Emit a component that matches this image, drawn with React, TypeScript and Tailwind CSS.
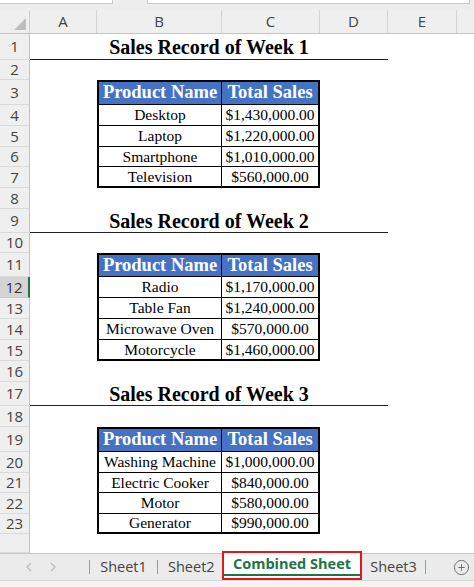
import { CirclePlus } from 'lucide-react';

type Row = {
  n: number;
  h: string;
  kind?: 'title' | 'head' | 'body';
  text?: string;
  a?: string;
  b?: string;
  last?: boolean;
};

const ROWS: Row[] = [
  { n: 1, h: 'h-[26px]', kind: 'title', text: 'Sales Record of Week 1' },
  { n: 2, h: 'h-[20px]' },
  { n: 3, h: 'h-[25px]', kind: 'head' },
  { n: 4, h: 'h-[21px]', kind: 'body', a: 'Desktop', b: '$1,430,000.00' },
  { n: 5, h: 'h-[21px]', kind: 'body', a: 'Laptop', b: '$1,220,000.00' },
  { n: 6, h: 'h-[20px]', kind: 'body', a: 'Smartphone', b: '$1,010,000.00' },
  { n: 7, h: 'h-[21px]', kind: 'body', a: 'Television', b: '$560,000.00', last: true },
  { n: 8, h: 'h-[21px]' },
  { n: 9, h: 'h-[24px]', kind: 'title', text: 'Sales Record of Week 2' },
  { n: 10, h: 'h-[20px]' },
  { n: 11, h: 'h-[24px]', kind: 'head' },
  { n: 12, h: 'h-[21px]', kind: 'body', a: 'Radio', b: '$1,170,000.00' },
  { n: 13, h: 'h-[21px]', kind: 'body', a: 'Table Fan', b: '$1,240,000.00' },
  { n: 14, h: 'h-[21px]', kind: 'body', a: 'Microwave Oven', b: '$570,000.00' },
  { n: 15, h: 'h-[21px]', kind: 'body', a: 'Motorcycle', b: '$1,460,000.00', last: true },
  { n: 16, h: 'h-[21px]' },
  { n: 17, h: 'h-[24px]', kind: 'title', text: 'Sales Record of Week 3' },
  { n: 18, h: 'h-[21px]' },
  { n: 19, h: 'h-[25px]', kind: 'head' },
  { n: 20, h: 'h-[21px]', kind: 'body', a: 'Washing Machine', b: '$1,000,000.00' },
  { n: 21, h: 'h-[20px]', kind: 'body', a: 'Electric Cooker', b: '$840,000.00' },
  { n: 22, h: 'h-[21px]', kind: 'body', a: 'Motor', b: '$580,000.00' },
  { n: 23, h: 'h-[20px]', kind: 'body', a: 'Generator', b: '$990,000.00', last: true },
  { n: 24, h: 'h-[19px]' },
];

const serif = "font-['Liberation_Serif','Times_New_Roman',serif]";
const ui = "font-['Open_Sans','Segoe_UI',sans-serif]";

export default function App() {
  return (
    <div className={`w-[474px] h-[587px] overflow-hidden bg-white flex flex-col ${ui}`}>
      {/* formula bar remnant */}
      <div className="h-[10px] bg-[#ededed] flex gap-[34px] shrink-0">
        <div className="w-[113px] h-[4px] bg-white border-b border-r border-[#c8c8c8]" />
        <div className="w-[323px] h-[4px] bg-white border-b border-x border-[#c8c8c8]" />
      </div>

      {/* column headers */}
      <div className="h-[24px] flex bg-[#efefef] border-b border-[#c4c4c4] text-[15px] text-[#444] shrink-0">
        <div className="w-[30px] border-r border-[#cfcfcf] flex items-end justify-end pr-[3px] pb-[3px]">
          <div className="w-0 h-0 border-l-[12px] border-l-transparent border-b-[12px] border-b-[#bdbdbd]" />
        </div>
        {[
          ['A', 'w-[67px]'],
          ['B', 'w-[125px]'],
          ['C', 'w-[98px]'],
          ['D', 'w-[68px]'],
          ['E', 'w-[69px]'],
        ].map(([l, w]) => (
          <div key={l} className={`${w} flex items-center justify-center border-r border-[#d4d4d4]`}>{l}</div>
        ))}
        <div className="flex-1" />
      </div>

      {/* grid rows */}
      <div className="flex flex-col shrink-0">
        {ROWS.map(r => (
          <SheetRow key={r.n} row={r} />
        ))}
      </div>

      {/* sheet tabs */}
      <div className="h-[27px] bg-[#ebebeb] border-t border-[#c6c6c6] flex items-center shrink-0 text-[14.5px] text-[#444]">
        <div className="w-[89px] flex items-center gap-[16px] pl-[25px]">
          <svg width="8" height="10" viewBox="0 0 8 10"><path d="M6 1 L2 5 L6 9" fill="none" stroke="#bdbdbd" strokeWidth="1.4" /></svg>
          <svg width="8" height="10" viewBox="0 0 8 10"><path d="M2 1 L6 5 L2 9" fill="none" stroke="#bdbdbd" strokeWidth="1.4" /></svg>
        </div>
        <div className="w-px h-[14px] bg-[#9a9a9a]" />
        <div className="w-[67px] flex justify-center">Sheet1</div>
        <div className="w-px h-[14px] bg-[#9a9a9a]" />
        <div className="w-[64px] pl-[10px]">Sheet2</div>
        <div className="-mt-[3px] w-[140px] h-[29px] bg-white border-2 border-[#e4161b] flex flex-col items-center justify-start">
          <div className="font-bold text-[#217346] border-b-2 border-[#217346] w-full text-center leading-[20px] pt-[1px]">Combined Sheet</div>
        </div>
        <div className="w-[63px] flex justify-center">Sheet3</div>
        <div className="w-px h-[14px] bg-[#9a9a9a]" />
        <div className="flex-1 flex justify-end pr-[4px]">
          <CirclePlus size={17} strokeWidth={1.3} color="#666" />
        </div>
      </div>
      <div className="flex-1 bg-[#f4f4f4] border-t border-[#d6d6d6]" />
    </div>
  );
}

function SheetRow({ row }: { row: Row }) {
  const sel = row.n === 12;
  return (
    <div className={`flex ${row.h}`}>
      <div
        className={
          sel
            ? 'w-[30px] bg-[#d4d4d4] border-r-2 border-r-[#217346] border-b border-b-[#c9c9c9] flex items-center justify-center text-[15px] text-[#333]'
            : 'w-[30px] bg-[#efefef] border-r border-r-[#c4c4c4] border-b border-b-[#dadada] flex items-center justify-center text-[15px] text-[#444]'
        }
      >
        {row.n === 24 ? '' : row.n}
      </div>
      {row.kind === 'title' && (
        <>
          <div className={`w-[358px] border-b border-[#222] flex items-center justify-center font-bold text-[20px] text-black ${serif}`}>
            {row.text}
          </div>
          <div className="flex-1" />
        </>
      )}
      {row.kind === 'head' && (
        <>
          <div className="w-[67px]" />
          <div className={`w-[125px] bg-[#4472c4] border-t-2 border-l-2 border-b border-r border-black flex items-center justify-center font-bold text-[18.5px] text-white ${serif}`}>
            Product Name
          </div>
          <div className={`w-[98px] bg-[#4472c4] border-t-2 border-r-2 border-b border-black flex items-center justify-center font-bold text-[18.5px] text-white ${serif}`}>
            Total Sales
          </div>
          <div className="flex-1" />
        </>
      )}
      {row.kind === 'body' && (
        <>
          <div className="w-[67px]" />
          <div
            className={`w-[125px] border-l-2 border-r border-black flex items-center justify-center text-[15.5px] text-black ${serif} ${
              row.last ? 'border-b-2' : 'border-b'
            }`}
          >
            {row.a}
          </div>
          <div
            className={`w-[98px] border-r-2 border-black flex items-center justify-center text-[15.5px] text-black ${serif} ${
              row.last ? 'border-b-2' : 'border-b'
            }`}
          >
            {row.b}
          </div>
          <div className="flex-1" />
        </>
      )}
      {!row.kind && <div className="flex-1" />}
    </div>
  );
}
